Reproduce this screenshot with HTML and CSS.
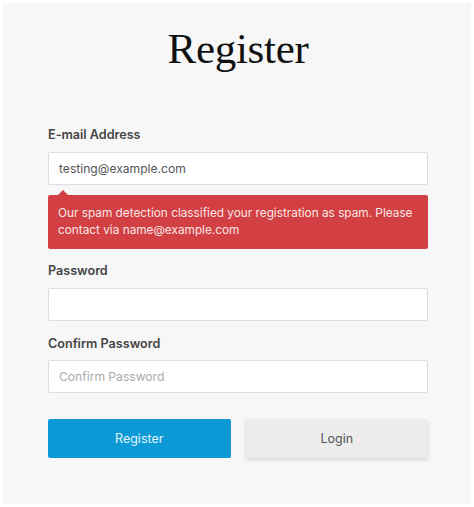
FILE: index.html
```html
<!DOCTYPE html>
<html lang="en">
<head>
<meta charset="utf-8">
<title>Register</title>
<link rel="stylesheet" href="styles.css">
</head>
<body>
<div class="panel">
  <h1 class="title">Register</h1>
  <form class="form">
    <label class="label">E-mail Address</label>
    <div class="input">testing@example.com</div>
    <div class="error">Our spam detection classified your registration as spam. Please contact via name@example.com</div>
    <label class="label label-gap">Password</label>
    <div class="input"></div>
    <label class="label label-gap2">Confirm Password</label>
    <div class="input placeholder">Confirm Password</div>
    <div class="actions">
      <button type="button" class="btn btn-primary">Register</button>
      <button type="button" class="btn btn-secondary">Login</button>
    </div>
  </form>
</div>
</body>
</html>
```

FILE: styles.css
```css
html, body {
  margin: 0;
  padding: 0;
  background: #ffffff;
}
body {
  padding: 3px 3px 3px 3px;
  font-family: Inter, "Noto Sans", "Liberation Sans", sans-serif;
}
.panel {
  width: 468px;
  height: 501px;
  background: #f7f7f7;
  box-sizing: border-box;
  padding: 21px 43px 0 45px;
}
.title {
  margin: 0;
  font-family: "Liberation Serif", "DejaVu Serif", serif;
  font-weight: normal;
  font-size: 43px;
  line-height: 50px;
  text-align: center;
  color: #111;
  letter-spacing: -0.3px;
}
.form {
  display: flex;
  flex-direction: column;
  margin-top: 53px;
}
.label {
  display: block;
  font-size: 12.6px;
  font-weight: 600;
  line-height: 16px;
  color: #444;
  margin-bottom: 9px;
}
.label-gap { margin-top: 14px; }
.label-gap2 { margin-top: 15px; margin-bottom: 8px; }
.input {
  height: 33px;
  box-sizing: border-box;
  background: #fff;
  border: 1px solid #dedede;
  border-radius: 2px;
  padding: 0 10px;
  font-size: 12.1px;
  line-height: 31px;
  color: #555;
}
.placeholder { color: #aaa; }
.error {
  position: relative;
  margin-top: 10px;
  background: #d24043;
  color: #f9e6e6;
  border-radius: 2px;
  padding: 10px 10px 10px 10px;
  font-size: 11.8px;
  line-height: 17px;
}
.error::before {
  content: "";
  position: absolute;
  left: 10px;
  top: -5px;
  border-left: 5px solid transparent;
  border-right: 5px solid transparent;
  border-bottom: 5px solid #d24043;
}
.actions {
  display: flex;
  gap: 15px;
  margin-top: 26px;
}
.btn {
  flex: 1;
  height: 39px;
  border: none;
  border-radius: 2px;
  font-family: Inter, "Noto Sans", "Liberation Sans", sans-serif;
  font-size: 12.5px;
  cursor: pointer;
}
.btn-primary {
  background: #0b9ad5;
  color: #e3f4fb;
}
.btn-secondary {
  background: #ececec;
  color: #555;
  box-shadow: 0 2px 4px rgba(0,0,0,0.15);
}
```
